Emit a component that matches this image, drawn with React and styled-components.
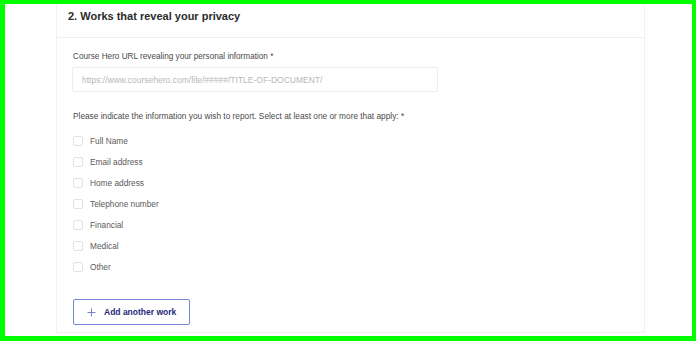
import React from 'react'
import styled, { createGlobalStyle } from 'styled-components'

const GlobalStyle = createGlobalStyle`
    html, body {
        margin: 0;
        padding: 0;
        background: #00ff00;
    }
    * {
        box-sizing: border-box;
    }
`

const options = [
    'Full Name',
    'Email address',
    'Home address',
    'Telephone number',
    'Financial',
    'Medical',
    'Other',
]

function App() {
    return (
        <>
            <GlobalStyle />
            <Frame>
                <Card>
                    <CardHeader>
                        <Title>2. Works that reveal your privacy</Title>
                    </CardHeader>

                    <CardBody>
                        <Label>Course Hero URL revealing your personal information *</Label>
                        <UrlInput placeholder="https://www.coursehero.com/file/#####/TITLE-OF-DOCUMENT/" />

                        <Question>
                            Please indicate the information you wish to report. Select at least one or more that apply: *
                        </Question>

                        <Options>
                            { options.map(option => (
                                <Option key={option}>
                                    <Box />
                                    <OptionText>{ option }</OptionText>
                                </Option>
                            ))}
                        </Options>

                        <AddButton>
                            <svg width="9" height="9" viewBox="0 0 9 9">
                                <path d="M4.5 0.5 V8.5 M0.5 4.5 H8.5" stroke="#7480cc" strokeWidth="1" fill="none" />
                            </svg>
                            Add another work
                        </AddButton>
                    </CardBody>
                </Card>
            </Frame>
        </>
    )
}

export default App

const Frame = styled.div`
    width: 696px;
    height: 341px;
    border-style: solid;
    border-color: #00ff00;
    border-width: 4px 4px 5px 5px;
    background: #ffffff;
    overflow: hidden;
    padding-left: 51px;
    font-family: "Liberation Sans", Arial, sans-serif;
`

const Card = styled.div`
    width: 589px;
    height: 329px;
    background: #ffffff;
    border: 1px solid #f0f0f0;
    border-top: none;
    display: flex;
    flex-direction: column;
`

const CardHeader = styled.div`
    height: 34px;
    padding: 6px 11px 0;
    border-bottom: 1px solid #efefef;
`

const Title = styled.h2`
    margin: 0;
    font-size: 11px;
    line-height: 13px;
    font-weight: 700;
    color: #2b2b2b;
`

const CardBody = styled.div`
    padding: 14px 16px 0;
    display: flex;
    flex-direction: column;
    align-items: flex-start;
`

const Label = styled.div`
    font-size: 8.2px;
    line-height: 10px;
    color: #4a4a4a;
`

const UrlInput = styled.input`
    margin-top: 5px;
    margin-left: -1px;
    width: 366px;
    height: 25px;
    border: 1px solid #ececec;
    border-radius: 2px;
    padding: 0 9px;
    font-family: inherit;
    font-size: 8.5px;
    outline: none;
    &::placeholder {
        color: #b8b8b8;
    }
`

const Question = styled.div`
    margin-top: 19px;
    font-size: 8.3px;
    line-height: 10px;
    color: #4a4a4a;
`

const Options = styled.div`
    margin-top: 9px;
    display: flex;
    flex-direction: column;
`

const Option = styled.label`
    height: 21px;
    display: flex;
    align-items: center;
    gap: 7px;
`

const Box = styled.span`
    width: 10px;
    height: 10px;
    border: 1px solid #e2e2e2;
    border-radius: 2px;
    background: #ffffff;
`

const OptionText = styled.span`
    font-size: 8.3px;
    color: #5a5a5a;
`

const AddButton = styled.button`
    margin-top: 22px;
    width: 117px;
    height: 26px;
    display: flex;
    align-items: center;
    gap: 8px;
    padding: 0 0 0 13px;
    background: #ffffff;
    border: 1px solid #7585d6;
    border-radius: 2px;
    font-family: inherit;
    font-size: 8.5px;
    font-weight: 700;
    color: #1f2a7a;
    cursor: pointer;
`
